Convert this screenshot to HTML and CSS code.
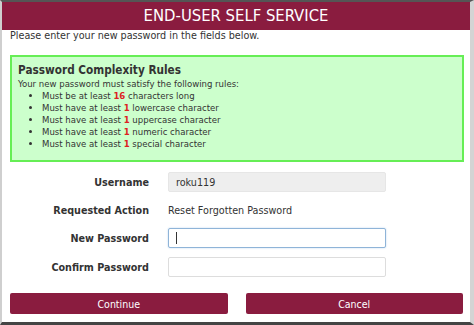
FILE: index.html
```html
<!DOCTYPE html>
<html lang="en">
<head>
  <meta charset="UTF-8">
  <title>End-User Self Service</title>
  <link rel="stylesheet" href="styles.css">
</head>
<body>
  <div class="frame">
    <header class="banner">END-USER SELF SERVICE</header>
    <p class="intro">Please enter your new password in the fields below.</p>

    <!-- Reglas de complejidad -->
    <div class="rules">
      <h2>Password Complexity Rules</h2>
      <p>Your new password must satisfy the following rules:</p>
      <ul>
        <li>Must be at least <b>16</b> characters long</li>
        <li>Must have at least <b>1</b> lowercase character</li>
        <li>Must have at least <b>1</b> uppercase character</li>
        <li>Must have at least <b>1</b> numeric character</li>
        <li>Must have at least <b>1</b> special character</li>
      </ul>
    </div>

    <form class="reset-form">
      <div class="form-row">
        <label>Username</label>
        <input type="text" value="roku119" class="readonly" readonly>
      </div>
      <div class="form-row short">
        <label>Requested Action</label>
        <span class="value">Reset Forgotten Password</span>
      </div>
      <div class="form-row">
        <label>New Password</label>
        <div class="field focused"><span class="caret"></span></div>
      </div>
      <div class="form-row">
        <label>Confirm Password</label>
        <div class="field"></div>
      </div>
      <div class="actions">
        <button type="button">Continue</button>
        <button type="button">Cancel</button>
      </div>
    </form>
  </div>
</body>
</html>
```

FILE: styles.css
```css
:root {
  --maroon: #8a1c3f;
  --text-color: #333;
}

body {
  margin: 0;
  background: #fff;
  font-family: "DejaVu Sans Condensed", "DejaVu Sans", sans-serif;
  color: var(--text-color);
}

.frame {
  width: 474px;
  height: 325px;
  box-sizing: border-box;
  border-top: 2px solid #555;
  border-left: 2px solid #cfcfcf;
  border-right: 4px solid #d4d4d4;
  border-bottom: 3px solid #444;
  background: #fff;
  overflow: hidden;
}

.banner {
  background: var(--maroon);
  color: #fff;
  text-align: center;
  font-size: 16.5px;
  height: 28px;
  line-height: 27px;
}

.intro {
  margin: 0;
  padding: 0 0 0 8px;
  font-size: 10.7px;
  line-height: 12px;
}

/* Caja de reglas */
.rules {
  margin: 13px 6px 0 8px;
  background: #ccffcc;
  border: 2px solid #66ee55;
  padding: 5px 6px 10px 6px;
  font-size: 9.5px;
  line-height: 12px;
  height: 88px;
}

.rules h2 {
  margin: 0;
  font-size: 11.7px;
  line-height: 16px;
}

.rules p {
  margin: 0;
}

.rules ul {
  margin: 0;
  padding-left: 24px;
}

.rules b {
  color: #dd2222;
}

/* Formulario */
.reset-form {
  margin-top: 10px;
  display: flex;
  flex-direction: column;
  gap: 9px;
}

.form-row {
  display: flex;
  align-items: center;
  height: 20px;
  font-size: 10.7px;
}

.form-row.short {
  height: 18px;
}

.form-row label {
  width: 147px;
  text-align: right;
  font-weight: bold;
  margin-right: 19px;
}

.form-row input,
.field {
  width: 218px;
  height: 20px;
  box-sizing: border-box;
  border: 1px solid #ddd;
  border-radius: 2px;
  font-family: inherit;
  font-size: 10.7px;
  padding: 0 7px;
  color: var(--text-color);
  background: #fff;
}

.form-row input.readonly {
  background: #eee;
  border-color: #e6e6e6;
}

.field.focused {
  border-color: #8fb4d8;
  box-shadow: 0 0 2px #bcd6ee;
  display: flex;
  align-items: center;
}

.caret {
  width: 1px;
  height: 12px;
  background: #333;
}

.actions {
  display: flex;
  gap: 18px;
  margin: 7px 7px 0 8px;
}

.actions button {
  flex: 1;
  height: 21px;
  background: var(--maroon);
  color: #fff;
  border: none;
  border-radius: 2px;
  font-family: inherit;
  font-size: 10.5px;
}
```
